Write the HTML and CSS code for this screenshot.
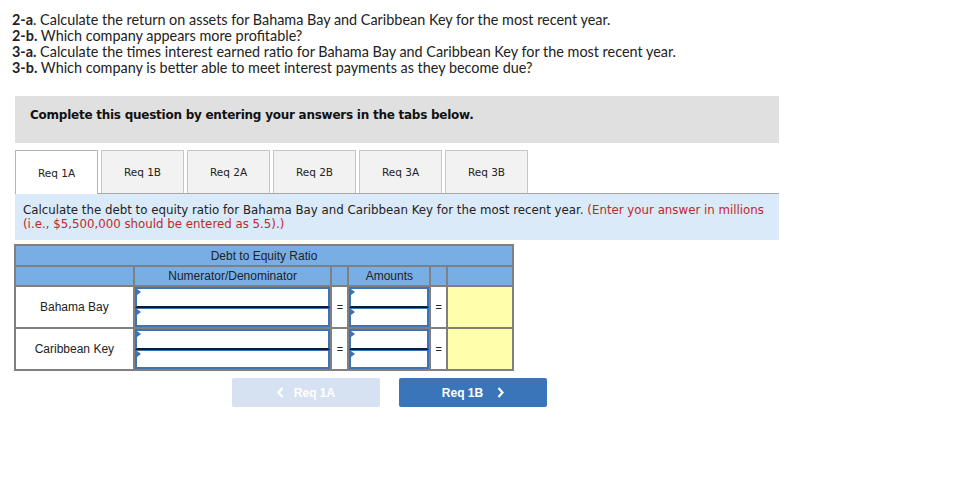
FILE: index.html
```html
<!DOCTYPE html>
<html>
<head>
<meta charset="utf-8">
<link rel="stylesheet" href="styles.css">
</head>
<body>
<div class="page">
  <div class="intro">
    <p><b>2-a</b>. Calculate the return on assets for Bahama Bay and Caribbean Key for the most recent year.</p>
    <p><b>2-b.</b> Which company appears more profitable?</p>
    <p><b>3-a.</b> Calculate the times interest earned ratio for Bahama Bay and Caribbean Key for the most recent year.</p>
    <p><b>3-b.</b> Which company is better able to meet interest payments as they become due?</p>
  </div>

  <div class="banner">Complete this question by entering your answers in the tabs below.</div>

  <div class="tabs">
    <div class="tab active">Req 1A</div>
    <div class="tab">Req 1B</div>
    <div class="tab">Req 2A</div>
    <div class="tab">Req 2B</div>
    <div class="tab">Req 3A</div>
    <div class="tab">Req 3B</div>
  </div>

  <div class="instr">
    <div>Calculate the debt to equity ratio for Bahama Bay and Caribbean Key for the most recent year. <span class="red">(Enter your answer in millions</span></div>
    <div class="red">(i.e., $5,500,000 should be entered as 5.5).)</div>
  </div>

  <table class="grid">
    <tr class="h1"><th colspan="6">Debt to Equity Ratio</th></tr>
    <tr class="h2">
      <th class="c-label"></th>
      <th class="c-nd">Numerator/Denominator</th>
      <th class="c-eq"></th>
      <th class="c-amt">Amounts</th>
      <th class="c-eq2"></th>
      <th class="c-res"></th>
    </tr>
    <tr class="row">
      <td class="label">Bahama Bay</td>
      <td class="inp"><div class="frac"><div class="box top"><i class="tri"></i></div><div class="box bot"><i class="tri"></i></div></div></td>
      <td class="eq">=</td>
      <td class="inp"><div class="frac"><div class="box top"><i class="tri"></i></div><div class="box bot"><i class="tri"></i></div></div></td>
      <td class="eq">=</td>
      <td class="res"></td>
    </tr>
    <tr class="row">
      <td class="label">Caribbean Key</td>
      <td class="inp"><div class="frac"><div class="box top"><i class="tri"></i></div><div class="box bot"><i class="tri"></i></div></div></td>
      <td class="eq">=</td>
      <td class="inp"><div class="frac"><div class="box top"><i class="tri"></i></div><div class="box bot"><i class="tri"></i></div></div></td>
      <td class="eq">=</td>
      <td class="res"></td>
    </tr>
  </table>

  <div class="nav">
    <div class="btn prev"><svg class="chev left" width="7" height="11" viewBox="0 0 7 11"><polyline points="5.5,1 1.5,5.5 5.5,10" fill="none" stroke="#fff" stroke-width="2.2"/></svg>Req 1A</div>
    <div class="btn next">Req 1B<svg class="chev right" width="7" height="11" viewBox="0 0 7 11"><polyline points="1.5,1 5.5,5.5 1.5,10" fill="none" stroke="#fff" stroke-width="2.2"/></svg></div>
  </div>
</div>
</body>
</html>
```

FILE: styles.css
```css
* { box-sizing: border-box; }
body { margin: 0; background: #fff; }
.page { padding: 12px 0 0 0; width: 954px; }

.intro { padding-left: 12px; font-family: "Lato", "Liberation Sans", sans-serif; font-size: 14.4px; color: #222; }
.intro p { margin: 0; line-height: 16px; }
.intro b { font-weight: 700; }

.banner {
  margin: 20px 0 0 15px; width: 764px; height: 47px;
  background: #e0e0e0; font-family: "DejaVu Sans", Verdana, sans-serif; font-weight: bold;
  font-size: 12px; letter-spacing: -0.25px; color: #111; padding: 12px 0 0 15px;
}

.tabs { display: flex; gap: 3px; margin: 7px 0 0 15px; height: 43px; width: 764px; }
.tab {
  width: 83px; height: 43px; background: #f2f2f2; border: 1px solid #c6c6c6; border-bottom: none;
  font-family: "DejaVu Sans", Verdana, sans-serif; font-size: 10.5px; color: #222;
  display: flex; align-items: center; justify-content: center;
}
.tab.active { background: #fff; border-color: #b5b5b5; position: relative; z-index: 1; height: 44px; }

.instr {
  margin-left: 15px; width: 764px; height: 47px; background: #dbeaf8;
  border-top: 1px solid #a8a8a8;
  font-family: "DejaVu Sans", Verdana, sans-serif; font-size: 11.8px; color: #222;
  padding: 9px 8px 0 8px; line-height: 14px;
}
.red { color: #c0272d; }

.grid {
  margin: 4px 0 0 14px; border-collapse: collapse; width: 500px;
  font-family: "Liberation Sans", Arial, sans-serif; font-size: 12px; color: #222;
}
.grid th, .grid td { border: 2px solid #808080; padding: 0; }
.h1 th { background: #78aee4; height: 21px; font-weight: normal; text-align: center; }
.h2 th { background: #78aee4; height: 20px; font-weight: normal; text-align: center; }
.c-label { width: 119px; }
.c-nd { width: 198px; }
.c-eq, .c-eq2 { width: 17px; }
.c-amt { width: 82px; }
.c-res { width: 66px; }
.row td { height: 42px; }
.label { text-align: center; background: #fff; }
.eq { text-align: center; font-size: 11px; }
.res { background: #ffffab; }
.inp { vertical-align: top; }
.frac { display: flex; flex-direction: column; height: 40px; }
.box { flex: 1; position: relative; border: 2px solid #3d72b4; background: #fff; }
.box.top { border-bottom: 2px solid #0d1b33; }
.box.bot { border-top: 1px solid #3d72b4; }
.tri {
  position: absolute; left: 0; top: 0; width: 0; height: 0;
  border-top: 3px solid transparent; border-bottom: 3px solid transparent; border-left: 4px solid #3d72b4;
}

.nav { display: flex; gap: 19px; margin: 7px 0 0 232px; }
.btn {
  width: 148px; height: 29px; border-radius: 2px; color: #fff;
  font-family: "Liberation Sans", Arial, sans-serif; font-weight: bold; font-size: 12px;
  display: flex; align-items: center; justify-content: center;
}
.prev { background: #d6e2f1; }
.next { background: #3a75ba; }
.chev { display: block; }
.chev.left { margin-right: 10px; }
.chev.right { margin-left: 14px; }
```
